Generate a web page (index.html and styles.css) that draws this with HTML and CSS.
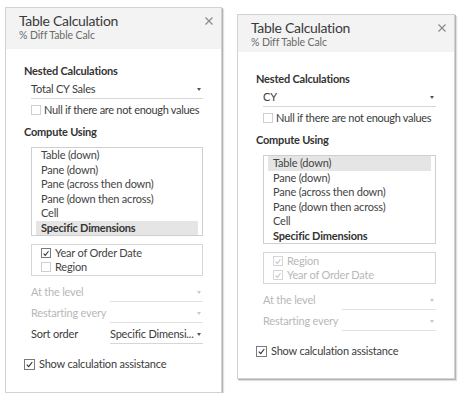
FILE: index.html
```html
<!DOCTYPE html>
<html lang="en">
<head>
<meta charset="UTF-8">
<meta name="viewport" content="width=device-width, initial-scale=1.0">
<title>Table Calculation</title>
<link rel="stylesheet" href="styles.css">
</head>
<body>

<div class="panels">
    <!-- left: specific dimensions -->
    <div class="panel">
        <div class="panel-head">
            <div class="title">Table Calculation</div>
            <div class="subtitle">% Diff Table Calc</div>
            <svg class="close" width="8" height="8" viewBox="0 0 8 8"><path d="M0.5 0.5L7.5 7.5M7.5 0.5L0.5 7.5"/></svg>
        </div>
        <div class="panel-body">
            <div class="section-label">Nested Calculations</div>
            <div class="select indent">
                <span>Total CY Sales</span><span class="caret"></span>
            </div>
            <div class="check null-row indent"><span class="box"></span>Null if there are not enough values</div>
            <div class="section-label">Compute Using</div>
            <div class="listbox indent">
                <div class="item">Table (down)</div>
                <div class="item">Pane (down)</div>
                <div class="item">Pane (across then down)</div>
                <div class="item">Pane (down then across)</div>
                <div class="item">Cell</div>
                <div class="item strong selected">Specific Dimensions</div>
            </div>
            <div class="dims indent">
                <div class="check"><span class="box checked"><svg width="9" height="9" viewBox="0 0 9 9"><path d="M1.8 4.6L3.7 6.6L7.3 2"/></svg></span>Year of Order Date</div>
                <div class="check"><span class="box"></span>Region</div>
            </div>
            <div class="field-row indent disabled">
                <span class="field-label">At the level</span>
                <div class="select"><span></span><span class="caret"></span></div>
            </div>
            <div class="field-row indent disabled">
                <span class="field-label">Restarting every</span>
                <div class="select"><span></span><span class="caret"></span></div>
            </div>
            <div class="field-row indent">
                <span class="field-label">Sort order</span>
                <div class="select"><span>Specific Dimensi...</span><span class="caret"></span></div>
            </div>
            <div class="check assist"><span class="box checked"><svg width="9" height="9" viewBox="0 0 9 9"><path d="M1.8 4.6L3.7 6.6L7.3 2"/></svg></span>Show calculation assistance</div>
        </div>
    </div>

    <!-- right: table (down) -->
    <div class="panel panel-alt">
        <div class="panel-head">
            <div class="title">Table Calculation</div>
            <div class="subtitle">% Diff Table Calc</div>
            <svg class="close" width="8" height="8" viewBox="0 0 8 8"><path d="M0.5 0.5L7.5 7.5M7.5 0.5L0.5 7.5"/></svg>
        </div>
        <div class="panel-body">
            <div class="section-label">Nested Calculations</div>
            <div class="select indent">
                <span>CY</span><span class="caret"></span>
            </div>
            <div class="check null-row indent"><span class="box"></span>Null if there are not enough values</div>
            <div class="section-label">Compute Using</div>
            <div class="listbox indent">
                <div class="item selected">Table (down)</div>
                <div class="item">Pane (down)</div>
                <div class="item">Pane (across then down)</div>
                <div class="item">Pane (down then across)</div>
                <div class="item">Cell</div>
                <div class="item strong">Specific Dimensions</div>
            </div>
            <div class="dims indent disabled">
                <div class="check"><span class="box checked"><svg width="9" height="9" viewBox="0 0 9 9"><path d="M1.8 4.6L3.7 6.6L7.3 2"/></svg></span>Region</div>
                <div class="check"><span class="box checked"><svg width="9" height="9" viewBox="0 0 9 9"><path d="M1.8 4.6L3.7 6.6L7.3 2"/></svg></span>Year of Order Date</div>
            </div>
            <div class="field-row indent disabled">
                <span class="field-label">At the level</span>
                <div class="select"><span></span><span class="caret"></span></div>
            </div>
            <div class="field-row indent disabled">
                <span class="field-label">Restarting every</span>
                <div class="select"><span></span><span class="caret"></span></div>
            </div>
            <div class="check assist"><span class="box checked"><svg width="9" height="9" viewBox="0 0 9 9"><path d="M1.8 4.6L3.7 6.6L7.3 2"/></svg></span>Show calculation assistance</div>
        </div>
    </div>
</div>

</body>
</html>
```

FILE: styles.css
```css
body {
    margin: 0;
    background: #fff;
    color: #3c3c3c;
    font-family: 'Lato', 'Liberation Sans', sans-serif;
    font-size: 11px;
    letter-spacing: -0.2px;
    white-space: nowrap;
}
.panels {
    display: flex;
    align-items: flex-start;
    gap: 15px;
    padding: 7px 0 0 5px;
}
.panel {
    width: 215px;
    background: #fff;
    border: 1px solid #d2d2d2;
    box-shadow: 1px 1px 0 #b4b4b4, 2px 2px 1px rgba(0,0,0,0.12);
}
.panel-alt { width: 216px; margin-top: 7px; }

.panel-head {
    position: relative;
    height: 37px;
    padding: 4px 0 0 13px;
    background: #f3f3f3;
}
.panel-alt .panel-head { height: 33px; }
.title { font-size: 14px; line-height: 17px; letter-spacing: -0.3px; color: #3a3a3a; }
.subtitle { font-size: 10.5px; line-height: 13px; letter-spacing: -0.1px; color: #6a6a6a; }
.close {
    position: absolute;
    top: 9px;
    right: 8px;
    stroke: #8a8a8a;
    stroke-width: 1.2;
    fill: none;
}

.panel-body { padding: 14px 18px 20px 18px; }
.panel-alt .panel-body { padding-top: 19px; padding-bottom: 19px; }

.section-label {
    font-weight: 700;
    line-height: 16px;
    color: #333;
}
.indent { margin-left: 7px; }

.select {
    display: flex;
    justify-content: space-between;
    align-items: center;
    height: 18px;
    line-height: 18px;
    border-bottom: 1px solid #d6d6d6;
    margin-top: 1px;
}
.caret {
    width: 0;
    height: 0;
    margin-right: 2px;
    border-left: 2.5px solid transparent;
    border-right: 2.5px solid transparent;
    border-top: 3px solid #555;
}

.check {
    display: flex;
    align-items: center;
    gap: 4px;
    height: 16px;
    line-height: 16px;
}
.null-row { margin-top: 3px; margin-bottom: 6px; gap: 3px; letter-spacing: -0.3px; }
.null-row .box { width: 10px; height: 10px; }
.box {
    display: flex;
    align-items: center;
    justify-content: center;
    flex-shrink: 0;
    box-sizing: border-box;
    width: 11px;
    height: 11px;
    border: 1px solid #cfcfcf;
    background: #fff;
}
.box.checked { border-color: #7a7a7a; }
.box svg { stroke: #333; stroke-width: 1.2; fill: none; }

.listbox {
    margin-top: 7px;
    border: 1px solid #cfcfcf;
    padding: 0 4px;
    color: #444;
}
.item {
    height: 14.5px;
    line-height: 14.5px;
    padding-left: 5px;
}
.item.strong { font-weight: 700; color: #333; }
.item.selected { background: #e5e5e5; }

.dims {
    margin-top: 8px;
    border: 1px solid #d6d6d6;
    padding: 1px 4px 1px;
}
.dims .check {
    height: 14px;
    line-height: 14px;
    padding-left: 5px;
    color: #444;
}
.dims .box { width: 10px; height: 10px; }

.field-row {
    display: flex;
    align-items: flex-start;
    height: 21px;
}
.dims + .field-row { margin-top: 7px; }
.field-label {
    width: 79px;
    flex-shrink: 0;
    line-height: 18px;
}
.field-row .select { flex: 1; margin-top: 0; }

.disabled .field-label,
.disabled .check { color: #b8b8b8; }
.disabled .select { border-bottom-color: #e2e2e2; }
.disabled .caret { border-top-color: #c8c8c8; }
.disabled .box { border-color: #d6d6d6; }
.disabled .box svg { stroke: #c4c4c4; }

.check.assist { margin-top: 10px; }
```
